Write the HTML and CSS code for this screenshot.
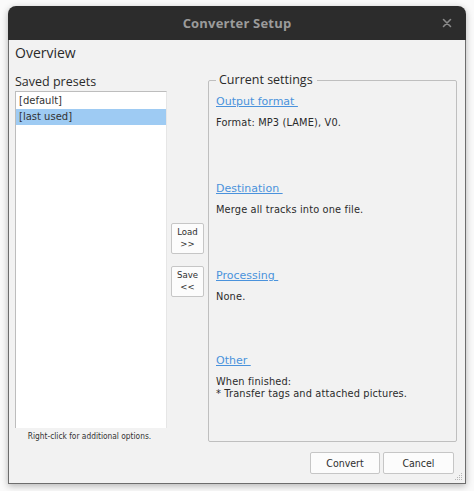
FILE: index.html
```html
<!DOCTYPE html>
<html>
<head>
<meta charset="utf-8">
<title>Converter Setup</title>
<link rel="stylesheet" href="styles.css">
</head>
<body>
<div class="window">
  <div class="titlebar">
    <span class="tb-spacer"></span>
    <span class="title">Converter Setup</span>
    <span class="close"><svg width="10" height="10" viewBox="0 0 10 10"><path d="M1.5 1.5 L8.5 8.5 M8.5 1.5 L1.5 8.5" stroke="#8a8a8a" stroke-width="1.6" stroke-linecap="round"/></svg></span>
  </div>
  <div class="body">
    <div class="heading">Overview</div>
    <div class="main">
      <div class="presets">
        <div class="label">Saved presets</div>
        <div class="list">
          <div class="item">[default]</div>
          <div class="item selected">[last used]</div>
        </div>
        <div class="hint">Right-click for additional options.</div>
      </div>
      <div class="transfer">
        <button class="small-btn">Load<br>&gt;&gt;</button>
        <button class="small-btn">Save<br>&lt;&lt;</button>
      </div>
      <fieldset class="group">
        <legend>Current settings</legend>
        <div class="section first">
          <a class="link" href="#">Output format&nbsp;</a>
          <div class="desc">Format: MP3 (LAME), V0.</div>
        </div>
        <div class="section">
          <a class="link" href="#">Destination&nbsp;</a>
          <div class="desc">Merge all tracks into one file.</div>
        </div>
        <div class="section third">
          <a class="link" href="#">Processing&nbsp;</a>
          <div class="desc">None.</div>
        </div>
        <div class="section last">
          <a class="link" href="#">Other&nbsp;</a>
          <div class="desc">When finished:<br>* Transfer tags and attached pictures.</div>
        </div>
      </fieldset>
    </div>
    <div class="footer">
      <button class="btn">Convert</button>
      <button class="btn">Cancel</button>
    </div>
    <svg class="grip" width="8" height="8" viewBox="0 0 8 8">
      <g fill="#b5b5b5"><rect x="6" y="0" width="1" height="1"/><rect x="4" y="2" width="1" height="1"/><rect x="6" y="2" width="1" height="1"/><rect x="2" y="4" width="1" height="1"/><rect x="4" y="4" width="1" height="1"/><rect x="6" y="4" width="1" height="1"/><rect x="0" y="6" width="1" height="1"/><rect x="2" y="6" width="1" height="1"/><rect x="4" y="6" width="1" height="1"/><rect x="6" y="6" width="1" height="1"/></g>
    </svg>
  </div>
</div>
</body>
</html>
```
FILE: styles.css
```css
* { box-sizing: border-box; }
html, body { margin: 0; padding: 0; }
body {
  background: #fafafa;
  width: 474px;
  height: 491px;
  overflow: hidden;
  font-family: "DejaVu Sans", sans-serif;
  color: #2f2f2f;
}
.window {
  width: 458px;
  height: 478px;
  margin: 6px 0 0 8px;
  border-radius: 8px 8px 0 0;
  box-shadow: 0 2px 7px rgba(0,0,0,0.28);
  display: flex;
  flex-direction: column;
}
.titlebar {
  height: 35px;
  background: #2c2c2c;
  border-radius: 8px 8px 0 0;
  display: grid;
  grid-template-columns: 40px 1fr 40px;
  align-items: center;
}
.title {
  text-align: center;
  font-family: "Open Sans", sans-serif;
  font-weight: 700;
  font-size: 13px;
  color: #9b9b9b;
  letter-spacing: 0.2px;
}
.close {
  display: flex;
  justify-content: flex-end;
  padding-right: 14px;
}
.close svg { display: block; }
.body {
  position: relative;
  flex: 1;
  background: #f2f2f2;
  border: 1px solid #6d6d6d;
  border-top: none;
  padding: 0 8px 0 6px;
  display: flex;
  flex-direction: column;
}
.heading {
  font-family: "Open Sans", sans-serif;
  font-size: 14px;
  line-height: 20px;
  padding-top: 3px;
  height: 29px;
  color: #2a2a2a;
}
.main {
  display: flex;
  height: 373px;
  gap: 4px;
}
.presets {
  width: 152px;
  display: flex;
  flex-direction: column;
}
.label {
  font-family: "Open Sans", sans-serif;
  font-size: 12.5px;
  line-height: 16px;
  padding-top: 5px;
  margin-bottom: 1px;
  color: #2a2a2a;
}
.list {
  height: 339px;
  background: #ffffff;
  border: 1px solid #bdbdbd;
  border-right-color: #e6e6e6;
  border-bottom: none;
  padding-top: 1px;
}
.item {
  font-size: 10px;
  line-height: 16px;
  padding-left: 3px;
  color: #333;
}
.item.selected { background: #9ecbf3; }
.hint {
  font-family: "DejaVu Sans Condensed", "DejaVu Sans", sans-serif;
  font-size: 8.3px;
  line-height: 12px;
  padding-top: 2px;
  text-align: center;
  color: #333;
  padding-right: 3px;
}
.transfer {
  width: 33px;
  display: flex;
  flex-direction: column;
  justify-content: center;
  gap: 12px;
  padding-top: 8px;
}
.small-btn {
  width: 33px;
  height: 31px;
  padding: 0;
  margin: 0;
  background: #fcfcfc;
  border: 1px solid #c6c6c6;
  border-radius: 2px;
  font-family: "DejaVu Sans Condensed", "DejaVu Sans", sans-serif;
  font-size: 9.5px;
  line-height: 12px;
  color: #2f2f2f;
}
.group {
  width: 249px;
  margin: 0;
  padding: 0 7px 0 7px;
  border: 1px solid #bfbfbf;
  border-radius: 2px;
  display: flex;
  flex-direction: column;
  min-width: 0;
}
.group legend {
  font-family: "Open Sans", sans-serif;
  font-size: 12.5px;
  line-height: 22px;
  padding: 0 4px 0 3px;
  color: #2a2a2a;
}
.section {
  height: 87px;
  display: flex;
  flex-direction: column;
  align-items: flex-start;
}
.section.first { padding-top: 2px; height: 89px; }
.section.third { height: 85px; }
.section.last { height: 85px; }
.link {
  font-size: 11px;
  line-height: 18px;
  color: #4a92dc;
  text-decoration: underline;
  margin-bottom: 6px;
}
.desc {
  font-size: 9.8px;
  line-height: 12px;
  color: #2b2b2b;
  letter-spacing: 0.15px;
}
.footer {
  height: 41px;
  display: flex;
  justify-content: flex-end;
  align-items: flex-start;
  gap: 3px;
  padding-top: 10px;
  padding-right: 3px;
}
.btn {
  height: 22px;
  width: 70px;
  margin: 0;
  padding: 0;
  background: #fcfcfc;
  border: 1px solid #c6c6c6;
  border-radius: 2px;
  font-family: "DejaVu Sans Condensed", "DejaVu Sans", sans-serif;
  font-size: 10.5px;
  color: #2f2f2f;
}
.btn + .btn { width: 71px; }
.grip {
  position: absolute;
  right: 2px;
  bottom: 2px;
}
```
